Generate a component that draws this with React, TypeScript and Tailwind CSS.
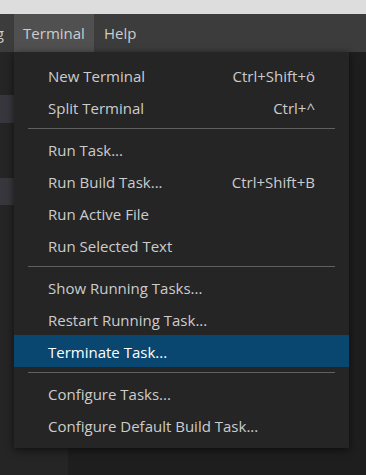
const items: (
  | { label: string; shortcut?: string; active?: boolean }
  | "sep"
)[] = [
  { label: "New Terminal", shortcut: "Ctrl+Shift+ö" },
  { label: "Split Terminal", shortcut: "Ctrl+^" },
  "sep",
  { label: "Run Task..." },
  { label: "Run Build Task...", shortcut: "Ctrl+Shift+B" },
  { label: "Run Active File" },
  { label: "Run Selected Text" },
  "sep",
  { label: "Show Running Tasks..." },
  { label: "Restart Running Task..." },
  { label: "Terminate Task...", active: true },
  "sep",
  { label: "Configure Tasks..." },
  { label: "Configure Default Build Task..." },
];

function App() {
  return (
    <div
      className="relative w-[366px] h-[475px] overflow-hidden flex flex-col bg-[#1e1e1e] text-[15px] text-[#cccccc]"
      style={{ fontFamily: '"Segoe UI", "Open Sans", "Noto Sans", sans-serif' }}
    >
      {/* title strip */}
      <div className="h-[14px] bg-[#dddddd] shrink-0" />

      {/* menubar */}
      <div className="h-[38px] bg-[#3c3c3c] flex items-stretch shrink-0">
        <div className="w-[14px] overflow-hidden flex justify-end">
          <span className="flex items-center pr-[10px] whitespace-nowrap">Debug</span>
        </div>
        <div className="w-[80px] bg-[#505050] flex items-center justify-center">Terminal</div>
        <div className="flex items-center px-[10px]">Help</div>
      </div>

      {/* workbench */}
      <div className="flex-1 flex">
        <div className="w-[68px] bg-[#252526] flex flex-col">
          <div className="h-[43px]" />
          <div className="h-[28px] bg-[#37373d]" />
          <div className="h-[55px]" />
          <div className="h-[27px] bg-[#37373d]" />
        </div>
        <div className="flex-1 bg-[#1e1e1e]" />
      </div>

      {/* terminal menu */}
      <div className="absolute left-[14px] top-[52px] w-[335px] bg-[#252526] pt-[7px] pb-[7px] shadow-[0_2px_8px_rgba(0,0,0,0.6)]">
        {items.map((it, i) =>
          it === "sep" ? (
            <div key={i} className="h-[10px] pt-[5px] px-[14px]">
              <div className="h-px bg-[#606060]" />
            </div>
          ) : (
            <div
              key={i}
              className={`h-8 flex items-center justify-between px-[34px] pt-[2px] whitespace-nowrap ${
                it.active ? "bg-[#094771] text-white" : ""
              }`}
            >
              <span>{it.label}</span>
              {it.shortcut && <span>{it.shortcut}</span>}
            </div>
          )
        )}
      </div>
    </div>
  );
}

export default App;
